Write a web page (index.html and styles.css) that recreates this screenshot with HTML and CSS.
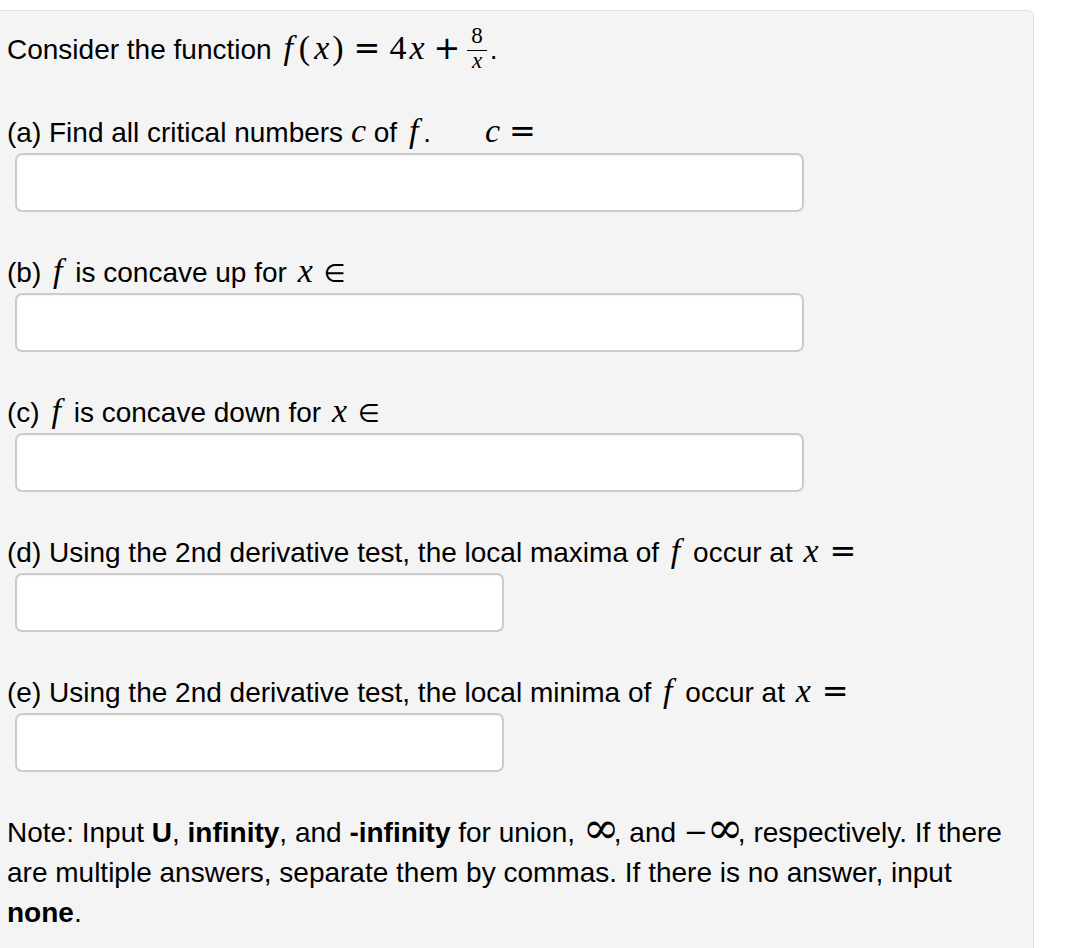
FILE: index.html
```html
<!DOCTYPE html>
<html>
<head>
<meta charset="utf-8">
<link rel="stylesheet" href="styles.css">
</head>
<body>
<div class="panel">
  <p class="line intro">Consider the function <span class="m"><i class="f">f</i><span class="p">(</span><i class="x">x</i><span class="p">)</span><span class="rel">=</span>4<i class="x">x</i><span class="bin">+</span><span class="frac"><span class="num">8</span><span class="den"><i>x</i></span></span></span>.</p>

  <div class="part">
    <p class="line">(a) Find all critical numbers <span class="m"><i>c</i></span> of <span class="m"><i class="f">f</i></span>. <span class="m gapq"><i>c</i><span class="rel">=</span></span></p>
    <div class="answer wide"></div>
  </div>

  <div class="part">
    <p class="line">(b) <span class="m"><i class="f">f</i></span> is concave up for <span class="m"><i class="x">x</i><span class="rel elem">∈</span></span></p>
    <div class="answer wide"></div>
  </div>

  <div class="part">
    <p class="line">(c) <span class="m"><i class="f">f</i></span> is concave down for <span class="m"><i class="x">x</i><span class="rel elem">∈</span></span></p>
    <div class="answer wide"></div>
  </div>

  <div class="part">
    <p class="line">(d) Using the 2nd derivative test, the local maxima of <span class="m"><i class="f">f</i></span> occur at <span class="m"><i class="x">x</i><span class="rel">=</span></span></p>
    <div class="answer narrow"></div>
  </div>

  <div class="part">
    <p class="line">(e) Using the 2nd derivative test, the local minima of <span class="m"><i class="f">f</i></span> occur at <span class="m"><i class="x">x</i><span class="rel">=</span></span></p>
    <div class="answer narrow"></div>
  </div>

  <p class="note">Note: Input <b>U</b>, <b>infinity</b>, and <b>-infinity</b> for union, <span class="m"><span class="inf">∞</span></span>, and <span class="m"><span class="minus">−</span><span class="inf">∞</span></span>, respectively. If there are multiple answers, separate them by commas. If there is no answer, input <b>none</b>.</p>
</div>
</body>
</html>
```

FILE: styles.css
```css
html, body {
  margin: 0;
  padding: 0;
  background: #ffffff;
}

body {
  font-family: "Liberation Sans", Arial, Helvetica, sans-serif;
  color: #000;
  font-size: 28px;
  line-height: 40px;
}

.panel {
  margin: 10px 0 0 -10px;
  width: 1044px;
  box-sizing: border-box;
  min-height: 960px;
  background: #f4f4f4;
  border: 1px solid #e2e2e2;
  border-radius: 6px;
  padding: 19px 14px 0 16px;
}

p {
  margin: 0;
}

.line {
  height: 40px;
  white-space: nowrap;
}

.intro {
  margin-bottom: 43px;
}

.part {
  margin-bottom: 41px;
}

/* math */
.m {
  font-family: "Liberation Serif", "Times New Roman", serif;
  font-size: 34px;
  line-height: 1;
}

.m i {
  font-style: italic;
}

.m i.f {
  padding: 0 5px 0 4px;
}

.m i.x {
  padding: 0 2px 0 3px;
}

.m .p {
  padding: 0 1px;
}

.rel,
.bin {
  font-family: "DejaVu Sans", sans-serif;
  font-size: 32px;
}

.rel {
  margin: 0 9px;
}

.bin {
  margin: 0 7px;
}

.rel.elem {
  font-size: 25px;
}

.gapq {
  margin-left: 46px;
}

.frac {
  display: inline-flex;
  flex-direction: column;
  align-items: stretch;
  text-align: center;
  vertical-align: 16px;
  font-size: 23px;
  margin: 0 3px 0 0;
}

.frac .num {
  border-bottom: 1.2px solid #000;
  padding: 0 4px 8px;
  line-height: 12px;
}

.frac .den {
  line-height: 20px;
  padding: 0 4px;
}

.inf {
  display: inline-block;
  width: 31px;
  text-align: center;
  font-family: "DejaVu Serif", serif;
  font-size: 44px;
  line-height: 20px;
  vertical-align: -1px;
}

.minus {
  display: inline-block;
  width: 23px;
  text-align: center;
  font-family: "DejaVu Sans", sans-serif;
  font-size: 29px;
  line-height: 20px;
}

.answer {
  height: 59px;
  margin-left: 8px;
  box-sizing: border-box;
  background: #fff;
  border: 2px solid #cbcbcb;
  border-radius: 7px;
  box-shadow: inset 0 1px 2px rgba(0, 0, 0, 0.05);
}

.answer.wide {
  width: 789px;
}

.answer.narrow {
  width: 489px;
}

.note {
  line-height: 40px;
}

.note b {
  font-weight: bold;
}
```
